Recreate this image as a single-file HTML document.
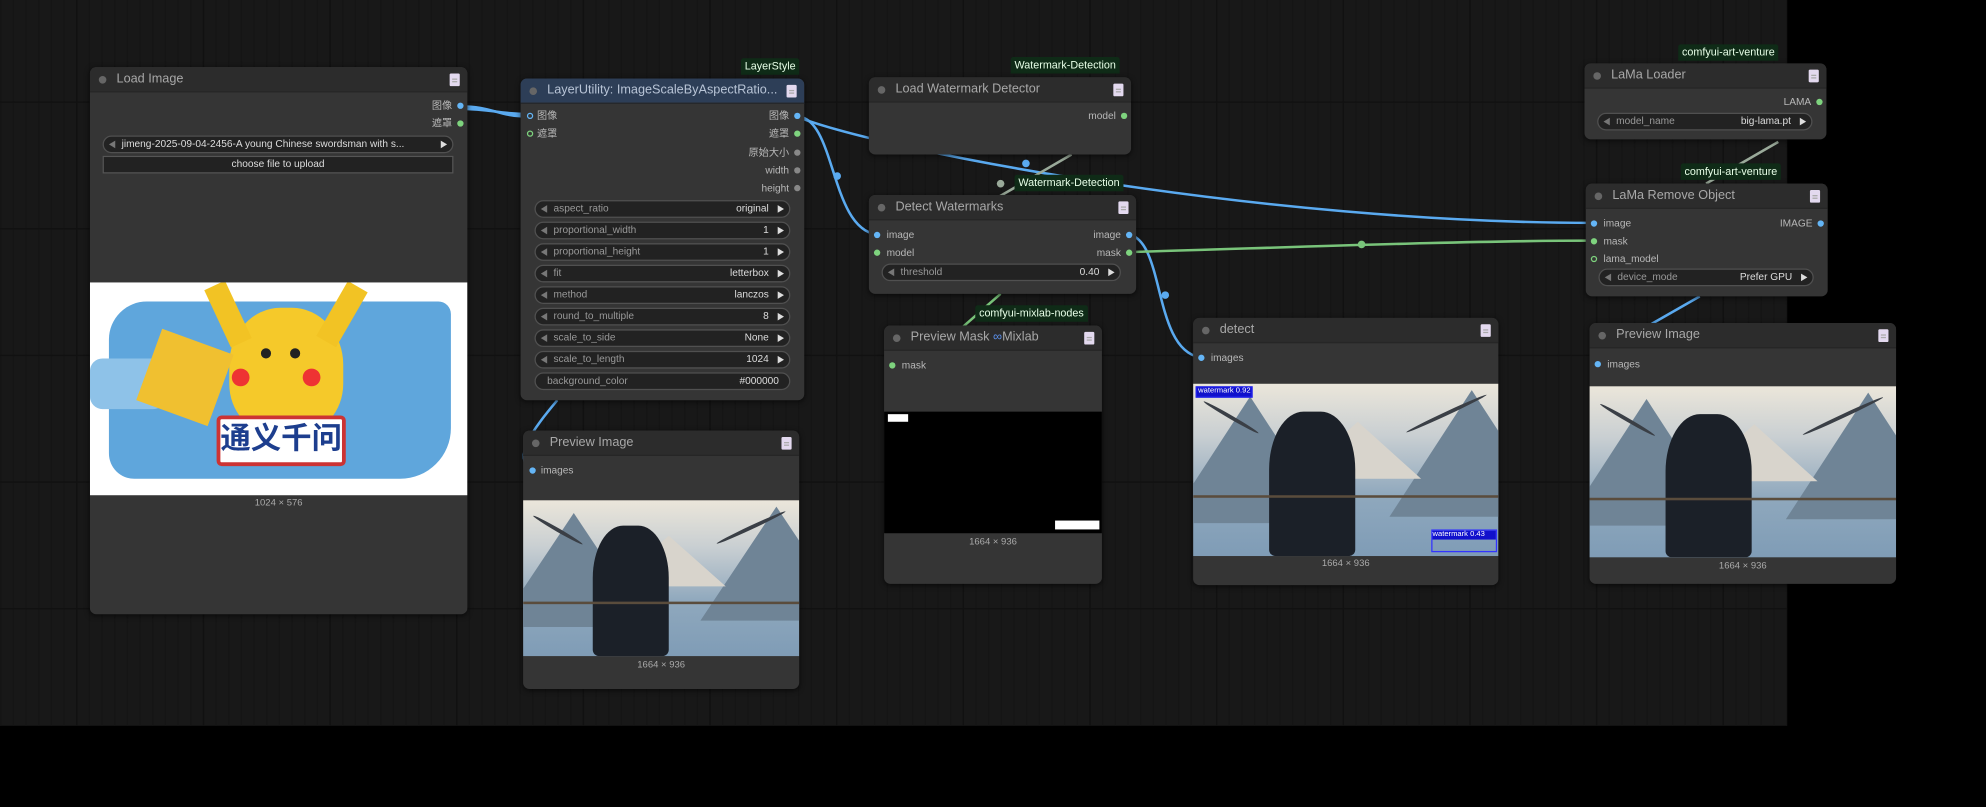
<!DOCTYPE html>
<html><head><meta charset="utf-8"><style>
*{box-sizing:border-box;margin:0;padding:0}
body{width:1986px;height:807px;overflow:hidden;background:#000;font-family:"Liberation Sans","Noto Sans CJK SC",sans-serif}
#s{position:absolute;left:0;top:0;width:1568px;height:637px;transform:scale(1.26658);transform-origin:0 0}
#cv{position:absolute;left:0;top:0;width:1411px;height:573px;background-color:#181818;
background-image:linear-gradient(#111 1px,transparent 1px),linear-gradient(90deg,#111 1px,transparent 1px),linear-gradient(90deg,#151515 1px,transparent 1px);
background-size:100px 100px,100px 100px,10px 10px;background-position:0 -20px,-40px 0,0 0}
.n{position:absolute;background:#353535;border-radius:5px;box-shadow:0 1px 4px rgba(0,0,0,.6);overflow:hidden}
.t{height:20px;background:#2c2c2c;color:#a8a8a8;font-size:10px;line-height:20px;padding-left:21px;position:relative;border-bottom:1px solid #262626}
.t:before{content:"";position:absolute;left:7px;top:7px;width:6px;height:6px;border-radius:50%;background:#666}
.t i{position:absolute;right:6px;top:5px;width:8px;height:10px;background:#e3d9ef;border-radius:1px}
.t i:after{content:"";position:absolute;left:2px;top:4px;width:4px;height:1px;background:#aaa;box-shadow:0 2px #aaa}
.sl{position:absolute;font-size:8px;color:#b8b8b8;line-height:10px;white-space:nowrap}
.d{position:absolute;width:5px;height:5px;border-radius:50%}
.b{background:#64b5f6}.g{background:#7ed37e}.gr{background:#888}
.w{position:absolute;height:14px;border-radius:7px;background:#222;border:1px solid #505050;font-size:8px;color:#999;line-height:12px;padding:0 14px 0 14px;white-space:nowrap}
.w:before{content:"";position:absolute;left:4px;top:3px;border:3.5px solid transparent;border-right:5px solid #777;border-left:0}
.w:after{content:"";position:absolute;right:4px;top:3px;border:3.5px solid transparent;border-left:5px solid #ddd;border-right:0}
.w.nb:before,.w.nb:after{display:none}
.w b{position:absolute;right:16px;color:#ddd;font-weight:normal}
.bd{position:absolute;background:#0f2b17;color:#e8ffe8;font-size:8.5px;line-height:13px;padding:0 3px;border-radius:2px 2px 0 0}
.cap{position:absolute;font-size:7.5px;color:#aaa;text-align:center;width:100%}
.img{position:absolute;overflow:hidden;background:linear-gradient(180deg,#ebe6da 0%,#c9cfd2 30%,#8fa8bd 65%,#7f9cb6 100%)}
.m{position:absolute;width:0;height:0;border-style:solid;border-color:transparent}
.fig{position:absolute;background:#1b2028;border-radius:40% 40% 5px 5px}
.rail{position:absolute;left:0;height:2px;background:#5a4c3c}
.bird{position:absolute;height:3px;background:#3a3f46;border-radius:50%}
</style></head><body><div id="s">
<div id="cv"></div>
<svg style="position:absolute;left:0;top:0" width="1568" height="637" fill="none" stroke-width="2">
<path d="M363 84 C390 84 392 92 418 92" stroke="#5aaaf0"/>
<path d="M363 86 C390 86 392 90 418 90" stroke="#5aaaf0"/>
<path d="M629 92 C660 92 655 180 692 185" stroke="#5aaaf0"/>
<circle cx="661" cy="139" r="3" fill="#5aaaf0"/>
<path d="M629 92 C700 120 1000 176 1258 176" stroke="#5aaaf0"/>
<circle cx="810" cy="129" r="3" fill="#5aaaf0"/>
<path d="M440 316 C420 340 405 360 419 371" stroke="#5aaaf0"/>
<path d="M891 185 C920 190 910 275 947 282" stroke="#5aaaf0"/>
<circle cx="920" cy="233" r="3" fill="#5aaaf0"/>
<path d="M891 199 C1000 196 1150 190 1258 190" stroke="#79c47a"/>
<circle cx="1075" cy="193" r="3" fill="#79c47a"/>
<path d="M846 122 L760 172" stroke="#9aaa9a"/>
<circle cx="790" cy="145" r="3" fill="#9aaa9a"/>
<path d="M790 232 L758 260" stroke="#79c47a"/>
<path d="M1404 112 L1347 145" stroke="#9aaa9a"/>
<path d="M1342 234 L1300 258" stroke="#5aaaf0"/>
</svg>

<!-- Load Image -->
<div class="n" style="left:71px;top:53px;width:298px;height:432px">
<div class="t">Load Image<i></i></div>
<div class="sl" style="right:12px;top:26px">图像</div><div class="d b" style="right:3px;top:28px"></div>
<div class="sl" style="right:12px;top:40px">遮罩</div><div class="d g" style="right:3px;top:42px"></div>
<div class="w" style="left:10px;top:54px;width:277px;color:#ddd;padding-left:14px">jimeng-2025-09-04-2456-A young Chinese swordsman with s...</div>
<div style="position:absolute;left:10px;top:70px;width:277px;height:14px;background:#222;border:1px solid #555;color:#ddd;font-size:8px;text-align:center;line-height:12px">choose file to upload</div>
<div class="img" style="left:0;top:170px;width:298px;height:168px;background:#fff">
 <div style="position:absolute;left:15px;top:15px;width:270px;height:140px;background:#5fa6dc;border-radius:30px 10px 40px 20px"></div>
 <div style="position:absolute;left:0;top:60px;width:60px;height:40px;background:#8ec2e8;border-radius:10px"></div>
 <div style="position:absolute;left:110px;top:20px;width:90px;height:100px;background:#f5c92a;border-radius:45% 45% 40% 40%"></div>
 <div style="position:absolute;left:100px;top:0;width:18px;height:50px;background:#f2c324;transform:rotate(-25deg)"></div>
 <div style="position:absolute;left:190px;top:0;width:18px;height:50px;background:#f2c324;transform:rotate(30deg)"></div>
 <div style="position:absolute;left:45px;top:45px;width:60px;height:60px;background:#f0c030;transform:rotate(20deg)"></div>
 <div style="position:absolute;left:112px;top:68px;width:14px;height:14px;border-radius:50%;background:#e33"></div>
 <div style="position:absolute;left:168px;top:68px;width:14px;height:14px;border-radius:50%;background:#e33"></div>
 <div style="position:absolute;left:135px;top:52px;width:8px;height:8px;border-radius:50%;background:#222"></div>
 <div style="position:absolute;left:158px;top:52px;width:8px;height:8px;border-radius:50%;background:#222"></div>
 <div style="position:absolute;left:100px;top:105px;width:102px;height:40px;background:#fff;border:3px solid #c33;border-radius:4px;color:#1d3e8e;font-size:24px;font-weight:bold;line-height:32px;text-align:center">通义千问</div>
</div>
<div class="cap" style="top:339px">1024 × 576</div>
</div>

<!-- LayerUtility -->
<div class="bd" style="left:585px;top:46px">LayerStyle</div>
<div class="n" style="left:411px;top:62px;width:224px;height:254px">
<div class="t" style="background:#2d3e57;color:#b8c4d6">LayerUtility: ImageScaleByAspectRatio...<i></i></div>
<div class="d b" style="left:5px;top:27px;background:none;border:1.5px solid #64b5f6"></div><div class="sl" style="left:13px;top:25px">图像</div>
<div class="d g" style="left:5px;top:41px;background:none;border:1.5px solid #7ed37e"></div><div class="sl" style="left:13px;top:39px">遮罩</div>
<div class="sl" style="right:12px;top:25px">图像</div><div class="d b" style="right:3px;top:27px"></div>
<div class="sl" style="right:12px;top:39px">遮罩</div><div class="d g" style="right:3px;top:41px"></div>
<div class="sl" style="right:12px;top:54px">原始大小</div><div class="d gr" style="right:3px;top:56px"></div>
<div class="sl" style="right:12px;top:68px">width</div><div class="d gr" style="right:3px;top:70px"></div>
<div class="sl" style="right:12px;top:82px">height</div><div class="d gr" style="right:3px;top:84px"></div>
<div class="w" style="left:11px;top:96px;width:202px">aspect_ratio<b>original</b></div>
<div class="w" style="left:11px;top:113px;width:202px">proportional_width<b>1</b></div>
<div class="w" style="left:11px;top:130px;width:202px">proportional_height<b>1</b></div>
<div class="w" style="left:11px;top:147px;width:202px">fit<b>letterbox</b></div>
<div class="w" style="left:11px;top:164px;width:202px">method<b>lanczos</b></div>
<div class="w" style="left:11px;top:181px;width:202px">round_to_multiple<b>8</b></div>
<div class="w" style="left:11px;top:198px;width:202px">scale_to_side<b>None</b></div>
<div class="w" style="left:11px;top:215px;width:202px">scale_to_length<b>1024</b></div>
<div class="w nb" style="left:11px;top:232px;width:202px;padding-left:9px">background_color<b style="right:8px">#000000</b></div>
</div>

<!-- Preview Image mid -->
<div class="n" style="left:413px;top:340px;width:218px;height:204px">
<div class="t">Preview Image<i></i></div>
<div class="d b" style="left:5px;top:29px"></div><div class="sl" style="left:14px;top:27px">images</div>
<div class="img" style="left:0;top:55px;width:218px;height:123px">
<div class="m" style="left:-20px;top:10px;border-width:0 60px 90px 60px;border-bottom-color:#6f8496"></div>
<div class="m" style="left:140px;top:5px;border-width:0 60px 90px 60px;border-bottom-color:#6f8496"></div>
<div class="m" style="left:70px;top:28px;border-width:0 45px 40px 45px;border-bottom-color:#d8d4cc"></div>
<div class="bird" style="left:5px;top:22px;width:45px;transform:rotate(30deg)"></div>
<div class="bird" style="left:150px;top:20px;width:60px;transform:rotate(-25deg)"></div>
<div class="fig" style="left:55px;top:20px;width:60px;height:103px"></div>
<div class="rail" style="top:80px;width:218px"></div>
</div>
<div class="cap" style="top:180px">1664 × 936</div>
</div>

<!-- Load Watermark Detector -->
<div class="bd" style="left:798px;top:45px">Watermark-Detection</div>
<div class="n" style="left:686px;top:61px;width:207px;height:61px">
<div class="t">Load Watermark Detector<i></i></div>
<div class="sl" style="right:12px;top:26px">model</div><div class="d g" style="right:3px;top:28px"></div>
</div>

<!-- Detect Watermarks -->
<div class="bd" style="left:801px;top:138px">Watermark-Detection</div>
<div class="n" style="left:686px;top:154px;width:211px;height:78px">
<div class="t">Detect Watermarks<i></i></div>
<div class="d b" style="left:4px;top:29px"></div><div class="sl" style="left:14px;top:27px">image</div>
<div class="d g" style="left:4px;top:43px"></div><div class="sl" style="left:14px;top:41px">model</div>
<div class="sl" style="right:12px;top:27px">image</div><div class="d b" style="right:3px;top:29px"></div>
<div class="sl" style="right:12px;top:41px">mask</div><div class="d g" style="right:3px;top:43px"></div>
<div class="w" style="left:10px;top:54px;width:189px">threshold<b>0.40</b></div>
</div>

<!-- Preview Mask -->
<div class="bd" style="left:770px;top:241px">comfyui-mixlab-nodes</div>
<div class="n" style="left:698px;top:257px;width:172px;height:204px">
<div class="t">Preview Mask <span style="color:#5a8ee8">∞</span>Mixlab<i></i></div>
<div class="d g" style="left:4px;top:29px"></div><div class="sl" style="left:14px;top:27px">mask</div>
<div style="position:absolute;left:0;top:68px;width:172px;height:96px;background:#000">
<div style="position:absolute;left:3px;top:2px;width:16px;height:6px;background:#fff"></div>
<div style="position:absolute;left:135px;top:86px;width:35px;height:7px;background:#fff"></div></div>
<div class="cap" style="top:166px">1664 × 936</div>
</div>

<!-- detect -->
<div class="n" style="left:942px;top:251px;width:241px;height:211px">
<div class="t">detect<i></i></div>
<div class="d b" style="left:4px;top:29px"></div><div class="sl" style="left:14px;top:27px">images</div>
<div class="img" style="left:0;top:52px;width:241px;height:136px">
<div class="m" style="left:-20px;top:10px;border-width:0 65px 100px 65px;border-bottom-color:#6f8496"></div>
<div class="m" style="left:155px;top:5px;border-width:0 65px 100px 65px;border-bottom-color:#6f8496"></div>
<div class="m" style="left:80px;top:30px;border-width:0 50px 45px 50px;border-bottom-color:#d8d4cc"></div>
<div class="bird" style="left:5px;top:25px;width:50px;transform:rotate(30deg)"></div>
<div class="bird" style="left:165px;top:22px;width:70px;transform:rotate(-25deg)"></div>
<div class="fig" style="left:60px;top:22px;width:68px;height:114px"></div>
<div class="rail" style="top:88px;width:241px"></div>
<div style="position:absolute;left:2px;top:2px;border:1px solid #22e;background:#11c;color:#fff;font-size:6px;line-height:7px;padding:0 1px">watermark 0.92</div>
<div style="position:absolute;left:188px;top:115px;width:52px;height:18px;border:1px solid #33f;color:#fff;font-size:6px"><div style="background:#11c;line-height:7px">watermark 0.43</div></div>
</div>
<div class="cap" style="top:189px">1664 × 936</div>
</div>

<!-- LaMa Loader -->
<div class="bd" style="left:1325px;top:35px">comfyui-art-venture</div>
<div class="n" style="left:1251px;top:50px;width:191px;height:60px">
<div class="t">LaMa Loader<i></i></div>
<div class="sl" style="right:12px;top:26px">LAMA</div><div class="d g" style="right:3px;top:28px"></div>
<div class="w" style="left:10px;top:39px;width:170px">model_name<b>big-lama.pt</b></div>
</div>

<!-- LaMa Remove -->
<div class="bd" style="left:1327px;top:129px">comfyui-art-venture</div>
<div class="n" style="left:1252px;top:145px;width:191px;height:89px">
<div class="t">LaMa Remove Object<i></i></div>
<div class="d b" style="left:4px;top:29px"></div><div class="sl" style="left:14px;top:27px">image</div>
<div class="d g" style="left:4px;top:43px"></div><div class="sl" style="left:14px;top:41px">mask</div>
<div class="d g" style="left:4px;top:57px;background:none;border:1.5px solid #7ed37e"></div><div class="sl" style="left:14px;top:55px">lama_model</div>
<div class="sl" style="right:12px;top:27px">IMAGE</div><div class="d b" style="right:3px;top:29px"></div>
<div class="w" style="left:10px;top:67px;width:170px">device_mode<b>Prefer GPU</b></div>
</div>

<!-- Preview Image right -->
<div class="n" style="left:1255px;top:255px;width:242px;height:206px">
<div class="t">Preview Image<i></i></div>
<div class="d b" style="left:4px;top:30px"></div><div class="sl" style="left:14px;top:28px">images</div>
<div class="img" style="left:0;top:50px;width:242px;height:135px">
<div class="m" style="left:-20px;top:10px;border-width:0 65px 100px 65px;border-bottom-color:#6f8496"></div>
<div class="m" style="left:155px;top:5px;border-width:0 65px 100px 65px;border-bottom-color:#6f8496"></div>
<div class="m" style="left:80px;top:30px;border-width:0 50px 45px 50px;border-bottom-color:#d8d4cc"></div>
<div class="bird" style="left:5px;top:25px;width:50px;transform:rotate(30deg)"></div>
<div class="bird" style="left:165px;top:22px;width:70px;transform:rotate(-25deg)"></div>
<div class="fig" style="left:60px;top:22px;width:68px;height:113px"></div>
<div class="rail" style="top:88px;width:242px"></div>
</div>
<div class="cap" style="top:187px">1664 × 936</div>
</div>
</div></body></html>
